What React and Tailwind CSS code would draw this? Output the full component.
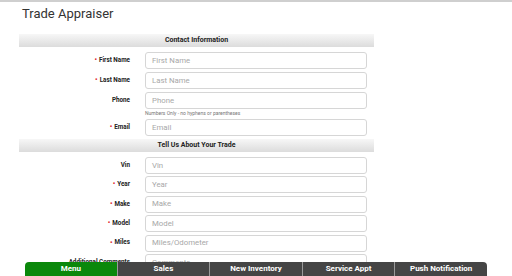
import React from 'react';

const contactFields = [
  { label: 'First Name', placeholder: 'First Name', required: true },
  { label: 'Last Name', placeholder: 'Last Name', required: true },
  { label: 'Phone', placeholder: 'Phone', help: 'Numbers Only - no hyphens or parentheses' },
  { label: 'Email', placeholder: 'Email', required: true },
];

const tradeFields = [
  { label: 'Vin', placeholder: 'Vin' },
  { label: 'Year', placeholder: 'Year', required: true },
  { label: 'Make', placeholder: 'Make', required: true },
  { label: 'Model', placeholder: 'Model', required: true },
  { label: 'Miles', placeholder: 'Miles/Odometer', required: true },
  { label: 'Additional Comments', placeholder: 'Comments' },
];

const tabs = ['Menu', 'Sales', 'New Inventory', 'Service Appt', 'Push Notification'];

function SectionHeader({ title }) {
  return (
    <div className="h-[13px] flex items-center justify-center bg-gradient-to-b from-[#f7f7f7] to-[#dcdcdc] text-[7px] font-bold text-[#222]">
      {title}
    </div>
  );
}

function Field({ label, placeholder, required, help }) {
  return (
    <div className="flex items-start">
      <div className="w-[111px] h-[17px] flex items-center justify-end text-[6.3px] font-bold text-[#222]">
        {required && <span className="text-[#e0262b] mr-[2px] text-[7px] leading-none">•</span>}
        {label}
      </div>
      <div className="ml-[15px] w-[222px]">
        <div className="h-[17px] rounded-[3px] border border-[#d6d6d6] bg-white flex items-center pl-[6px] text-[7.8px] text-[#a8a8a8]">
          {placeholder}
        </div>
        {help && <div className="text-[5px] text-[#777] mt-[1px] leading-[6px]">{help}</div>}
      </div>
    </div>
  );
}

export default function App() {
  return (
    <div className="w-[512px] h-[276px] overflow-hidden bg-white relative font-['Roboto',sans-serif] border-t-2 border-[#cfcfcf]">
      <h1 className="pl-[22px] pt-[3px] text-[13px] leading-[17px] text-[#333]">Trade Appraiser</h1>
      <div className="ml-[19px] w-[355px] mt-[12px]">
        <SectionHeader title="Contact Information" />
        <div className="pt-[5px] flex flex-col gap-[3px]">
          {contactFields.map((f) => <Field key={f.label} {...f} />)}
        </div>
        <div className="mt-[3px]">
          <SectionHeader title="Tell Us About Your Trade" />
        </div>
        <div className="pt-[5px] flex flex-col gap-[2.4px]">
          {tradeFields.map((f) => <Field key={f.label} {...f} />)}
        </div>
      </div>

      {/* bottom tab bar */}
      <div className="absolute left-[25px] bottom-0 w-[462px] h-[14px] flex">
        {tabs.map((t, i) => (
          <div
            key={t}
            className={`flex-1 flex items-center justify-center text-[8px] font-bold text-white ${
              i === 0 ? 'bg-[#0b880b] rounded-tl-[4px]' : 'bg-[#454545] border-l border-[#9a9a9a]'
            } ${i === tabs.length - 1 ? 'rounded-tr-[4px]' : ''}`}
          >
            {t}
          </div>
        ))}
      </div>
    </div>
  );
}
